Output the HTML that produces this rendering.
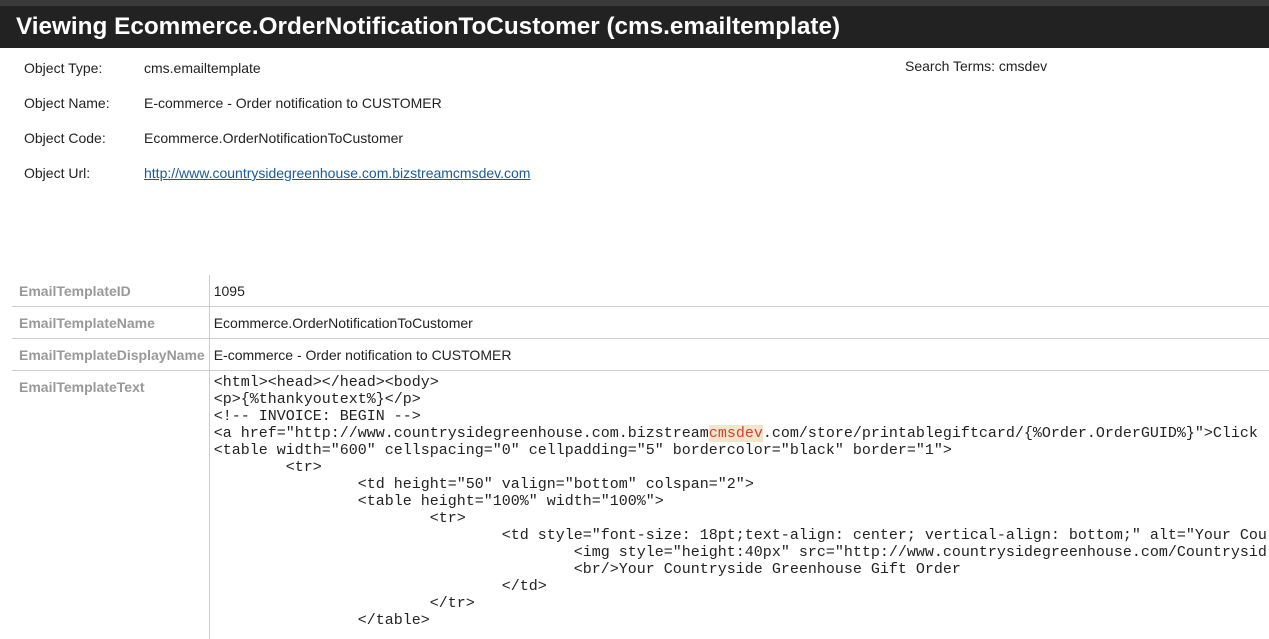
<!DOCTYPE html>
<html><head><style>
body{margin:0;background:#fff;font-family:"Liberation Sans",sans-serif;width:1269px;height:633px;overflow:hidden;position:relative}
.top{position:absolute;left:0;top:0;width:1269px;height:6px;background:#3a3a3a}
.hdr{position:absolute;left:0;top:6px;width:1269px;height:42px;background:#222;color:#fff;font-weight:bold;font-size:24.3px;line-height:42px;padding-left:16px;box-sizing:border-box;white-space:nowrap}
.r{position:absolute;font-size:14px;color:#222;white-space:nowrap}
a{color:#1a5a9a}
table{position:absolute;left:12px;top:275px;border-collapse:collapse;width:1257px}
td{font-size:14px;vertical-align:top;padding:8px 4px 0 7px;height:23px;border-bottom:1px solid #ccc;box-sizing:content-box}
td.l{color:#999;font-weight:bold;width:187px;border-right:1px solid #ccc}
td.v{color:#222;padding-left:4px}
pre{margin:0;font-family:"Liberation Mono",monospace;font-size:15px;line-height:17px;color:#222;tab-size:8;white-space:pre;overflow:hidden;width:1052px}
.hl{background:#f3e6c8;color:#d04040}
</style></head><body>
<div class="top"></div>
<div class="hdr">Viewing Ecommerce.OrderNotificationToCustomer (cms.emailtemplate)</div>
<div class="r" style="left:24px;top:60px">Object Type:</div><div class="r" style="left:144px;top:60px">cms.emailtemplate</div>
<div class="r" style="left:24px;top:95px">Object Name:</div><div class="r" style="left:144px;top:95px">E-commerce - Order notification to CUSTOMER</div>
<div class="r" style="left:24px;top:130px">Object Code:</div><div class="r" style="left:144px;top:130px">Ecommerce.OrderNotificationToCustomer</div>
<div class="r" style="left:24px;top:165px">Object Url:</div><div class="r" style="left:144px;top:165px"><a href="#">http://www.countrysidegreenhouse.com.bizstreamcmsdev.com</a></div>
<div class="r" style="left:905px;top:58px">Search Terms: cmsdev</div>
<table>
<tr><td class="l">EmailTemplateID</td><td class="v">1095</td></tr>
<tr><td class="l">EmailTemplateName</td><td class="v">Ecommerce.OrderNotificationToCustomer</td></tr>
<tr><td class="l">EmailTemplateDisplayName</td><td class="v">E-commerce - Order notification to CUSTOMER</td></tr>
<tr><td class="l" style="border-bottom:none;height:260px">EmailTemplateText</td><td class="v" style="border-bottom:none;padding-top:3px"><pre>&lt;html&gt;&lt;head&gt;&lt;/head&gt;&lt;body&gt;
&lt;p&gt;{%thankyoutext%}&lt;/p&gt;
&lt;!-- INVOICE: BEGIN --&gt;
&lt;a href="http://www.countrysidegreenhouse.com.bizstream<span class="hl">cmsdev</span>.com/store/printablegiftcard/{%Order.OrderGUID%}"&gt;Click here
&lt;table width="600" cellspacing="0" cellpadding="5" bordercolor="black" border="1"&gt;
	&lt;tr&gt;
		&lt;td height="50" valign="bottom" colspan="2"&gt;
		&lt;table height="100%" width="100%"&gt;
			&lt;tr&gt;
				&lt;td style="font-size: 18pt;text-align: center; vertical-align: bottom;" alt="Your Countryside
					&lt;img style="height:40px" src="http://www.countrysidegreenhouse.com/Countryside
					&lt;br/&gt;Your Countryside Greenhouse Gift Order
				&lt;/td&gt;
			&lt;/tr&gt;
		&lt;/table&gt;</pre></td></tr>
</table>
</body></html>
